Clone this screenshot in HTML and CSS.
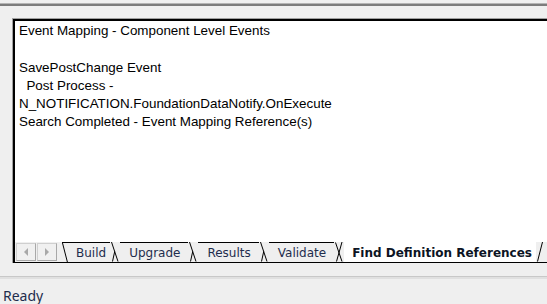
FILE: index.html
```html
<!DOCTYPE html>
<html>
<head>
<meta charset="utf-8">
<link rel="stylesheet" href="styles.css">
</head>
<body>
<div class="app">
  <div class="topline"></div>
  <div class="panel">
    <div class="panel-inner">
      <div class="output">
        <div class="line">Event Mapping - Component Level Events</div>
        <div class="line">&nbsp;</div>
        <div class="line">SavePostChange Event</div>
        <div class="line">&nbsp;&nbsp;Post Process -</div>
        <div class="line">N_NOTIFICATION.FoundationDataNotify.OnExecute</div>
        <div class="line">Search Completed - Event Mapping Reference(s)</div>
      </div>
      <div class="tabstrip">
        <div class="scrollbtns">
          <div class="sbtn"><svg width="8" height="10" viewBox="0 0 8 10"><path d="M6 1 L2 5 L6 9 Z" fill="#a8a8a8"/></svg></div>
          <div class="sbtn"><svg width="8" height="10" viewBox="0 0 8 10"><path d="M2 1 L6 5 L2 9 Z" fill="#a8a8a8"/></svg></div>
        </div>
        <svg class="sep first" width="8" height="20" viewBox="0 0 8 20"><path d="M0.5 0 L5.5 19.5" stroke="#000" fill="none"/></svg>
        <span class="tab tab-build">Build</span>
        <svg class="sep" width="10" height="20" viewBox="0 0 10 20"><path d="M1.5 0 L8 19.5 M4.7 9.5 L2.5 19.5" stroke="#000" fill="none"/></svg>
        <span class="tab">Upgrade</span>
        <svg class="sep" width="10" height="20" viewBox="0 0 10 20"><path d="M1.5 0 L8 19.5 M4.7 9.5 L2.5 19.5" stroke="#000" fill="none"/></svg>
        <span class="tab">Results</span>
        <svg class="sep" width="10" height="20" viewBox="0 0 10 20"><path d="M1.5 0 L8 19.5 M4.7 9.5 L2.5 19.5" stroke="#000" fill="none"/></svg>
        <span class="tab">Validate</span>
        <svg class="sep" width="10" height="20" viewBox="0 0 10 20"><path d="M8 0 L2.5 19.5 M1.5 0.5 L8 19.5" stroke="#000" fill="none"/></svg>
        <span class="tab active">Find Definition References</span>
        <svg class="sep last" width="8" height="20" viewBox="0 0 8 20"><path d="M6.5 0 L1.5 19.5" stroke="#000" fill="none"/></svg>
      </div>
    </div>
  </div>
  <div class="statusline"></div>
  <div class="status">Ready</div>
</div>
</body>
</html>
```
FILE: styles.css
```css
html, body {
  margin: 0;
  padding: 0;
}
body {
  width: 547px;
  height: 304px;
  overflow: hidden;
  background: #efefef;
}
.app {
  display: flex;
  flex-direction: column;
  height: 304px;
}
.topline {
  flex: none;
  margin-top: 3px;
  height: 0;
  border-top: 1px solid #b4b4b4;
  border-bottom: 2px solid #7c7c7c;
}
.panel {
  flex: none;
  margin: 12px 0 0 12px;
  width: 560px;
  height: 245px;
  border-left: 1px solid #a0a0a0;
  border-top: 1px solid #a0a0a0;
  box-sizing: border-box;
}
.panel-inner {
  height: 100%;
  border-left: 2px solid #000;
  border-top: 2px solid #000;
  border-bottom: 1px solid #000;
  box-sizing: border-box;
  background: #fff;
  display: flex;
  flex-direction: column;
}
.output {
  flex: 1;
  padding: 1px 0 0 4px;
  font-family: "Liberation Sans", Arial, sans-serif;
  font-size: 13.4px;
  color: #000;
}
.line {
  height: 18px;
  line-height: 18px;
  white-space: pre;
}
.line:nth-child(n+3) {
  position: relative;
  top: 1px;
}
.tabstrip {
  flex: none;
  height: 20px;
  display: flex;
  align-items: stretch;
  background: #efefef;
  font-family: "DejaVu Sans", Tahoma, sans-serif;
  font-size: 12px;
  color: #1e2d4d;
}
.scrollbtns {
  display: flex;
  padding: 1px 0 0 1px;
}
.sbtn {
  width: 20px;
  height: 18px;
  border: 1px solid #cfcfcf;
  border-right-color: #a8a8a8;
  border-bottom-color: #a8a8a8;
  box-sizing: border-box;
  display: flex;
  align-items: center;
  justify-content: center;
  background: #f0f0f0;
}
.sbtn + .sbtn {
  margin-left: 1px;
}
.sep {
  flex: none;
  display: block;
}
.sep.first {
  margin-left: 5px;
  border-top: 1px solid #000;
}
.tab {
  display: flex;
  align-items: center;
  padding: 0 8px 0 9px;
  border-top: 1px solid #000;
  box-sizing: border-box;
  white-space: nowrap;
}
.tab.tab-build {
  padding: 0 4px 0 6px;
}
.tab.active {
  padding: 0 4px 0 8px;
  background: #fff;
  border-top: 1px solid #fff;
  font-weight: bold;
  color: #0c1424;
}
.statusline {
  flex: none;
  margin-top: 13px;
  height: 0;
  border-top: 1px solid #c8c8c8;
  border-bottom: 2px solid #e0e0e0;
}
.status {
  flex: 1;
  min-height: 0;
  padding: 8px 0 0 3px;
  font-family: "Noto Sans", "Open Sans", sans-serif;
  font-size: 14px;
  line-height: 18px;
  color: #1e2d4d;
}
```
